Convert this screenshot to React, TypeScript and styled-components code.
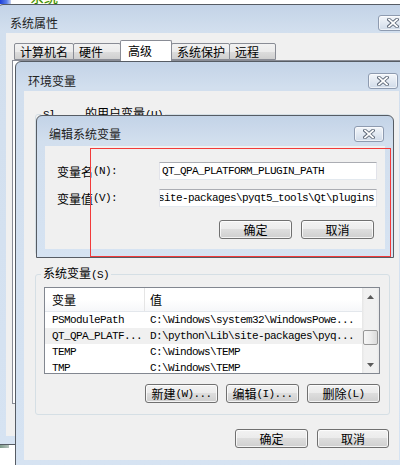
import React from "react";
import styled, { createGlobalStyle } from "styled-components";

const CJK = `"Noto Sans CJK SC", "Liberation Sans", sans-serif`;
const MONO = `"Liberation Mono", "Noto Sans CJK SC", monospace`;

const GlobalStyle = createGlobalStyle`
  html, body { margin: 0; padding: 0; background: #fff; }
  body { width: 400px; height: 465px; overflow: hidden; font-family: ${CJK}; font-size: 12px; color: #000; }
  * { box-sizing: border-box; }
`;

const Desktop = styled.div`
  position: relative;
  width: 400px;
  height: 465px;
  overflow: hidden;
  background: #fff;
`;

const DesktopIcon = styled.div`
  position: absolute;
  left: 0;
  top: 0;
  width: 11px;
  height: 4px;
  background: linear-gradient(90deg, #1d3fd8, #5a7ee8 60%, #c9d4ef);
`;

const DesktopLabel = styled.span`
  position: absolute;
  left: 30px;
  top: -12px;
  font-family: ${CJK};
  font-size: 14px;
  line-height: 16px;
  color: #2f8a12;
  text-shadow: 0 0 1px #e2e23a;
`;

const DesktopThumb = styled.div`
  position: absolute;
  left: 0;
  top: 445px;
  width: 9px;
  height: 3px;
  background: linear-gradient(90deg, #7d9a8a, #b7c3bd);
`;

const Window = styled.div<{ $left: number; $top: number; $width: number; $height: number; $z: number }>`
  position: absolute;
  z-index: ${(p) => p.$z};
  left: ${(p) => p.$left}px;
  top: ${(p) => p.$top}px;
  width: ${(p) => p.$width}px;
  height: ${(p) => p.$height}px;
  border: 1px solid #565c64;
  border-radius: 6px 6px 0 0;
  background: linear-gradient(180deg, #c3d3e7 0px, #d2dfee 26px, #d6e3f2 100%);
  padding: 0 8px 8px;
  display: flex;
  flex-direction: column;
`;

const TitleBar = styled.div<{ $h: number; $pad: number }>`
  flex: none;
  height: ${(p) => p.$h}px;
  padding-top: ${(p) => p.$pad}px;
  display: flex;
  align-items: center;
  justify-content: space-between;
`;

const Caption = styled.span`
  margin-left: 4px;
  font-family: ${CJK};
  font-size: 12px;
  line-height: 14px;
  color: #222;
`;

const CloseBtn = styled.div`
  width: 30px;
  height: 16px;
  margin-right: 1px;
  border: 1px solid #8e9bb0;
  border-radius: 3px;
  background: linear-gradient(180deg, #f3f6fa 0%, #e2e9f2 50%, #d0dbe9 100%);
  box-shadow: inset 0 0 0 1px rgba(255, 255, 255, 0.6);
  display: grid;
  place-items: center;
`;

const CloseIcon = () => (
  <svg width="12" height="10" viewBox="0 0 12 10">
    <path d="M2 1.5 L10 8.5 M10 1.5 L2 8.5" stroke="#5d6878" strokeWidth="3.6" strokeLinecap="square" fill="none" />
    <path d="M2 1.5 L10 8.5 M10 1.5 L2 8.5" stroke="#ffffff" strokeWidth="1.7" strokeLinecap="square" fill="none" />
  </svg>
);

const Client = styled.div`
  flex: 1;
  min-height: 0;
  background: #f0f0f0;
  overflow: hidden;
`;

/* ---------- Window 1: 系统属性 ---------- */

const PropsClient = styled(Client)`
  padding: 7px 6px 0 6px;
`;

const TabRow = styled.div`
  height: 20px;
  padding-left: 2px;
  display: flex;
  align-items: flex-end;
`;

const Tab = styled.div<{ $w: number; $selected?: boolean; $first?: boolean }>`
  position: relative;
  width: ${(p) => p.$w}px;
  height: ${(p) => (p.$selected ? 21 : 17)}px;
  margin-left: ${(p) => (p.$first ? 0 : -1)}px;
  margin-bottom: ${(p) => (p.$selected ? -1 : 0)}px;
  z-index: ${(p) => (p.$selected ? 2 : 1)};
  border: 1px solid #898c95;
  border-bottom: ${(p) => (p.$selected ? "none" : "1px solid #898c95")};
  border-radius: 2px 2px 0 0;
  background: ${(p) => (p.$selected ? "#ffffff" : "linear-gradient(180deg, #f2f2f2 0%, #ebebeb 50%, #dddddd 51%, #cfcfcf 100%)")};
  padding: ${(p) => (p.$selected ? "2px 0 0 7px" : "0 0 0 5px")};
  font-size: 12px;
  line-height: 15px;
  white-space: nowrap;
`;

const TabPane = styled.div`
  position: relative;
  z-index: 1;
  height: 344px;
  border: 1px solid #898c95;
  background: #fff;
`;

/* ---------- Window 2: 环境变量 ---------- */

const EnvClient = styled(Client)`
  padding: 15px 9px 0 11px;
  display: flex;
  flex-direction: column;
`;

const Group = styled.fieldset`
  margin: 0;
  padding: 0 9px 11px 8px;
  border: 1px solid #d5dfe5;
  border-radius: 3px;
  min-width: 0;
`;

const Legend = styled.legend`
  margin-left: -3px;
  padding: 0 2px;
  font-family: ${CJK};
  font-size: 12px;
  line-height: 14px;
  white-space: nowrap;
`;

const Latin = styled.span`
  font-family: ${MONO};
  font-size: 11px;
  letter-spacing: -0.6px;
`;

const NameGap = styled.span`
  display: inline-block;
  width: 30px;
`;

const HiddenBody = styled.div`
  height: 121px;
`;

const SysGroup = styled(Group)`
  margin-top: 11px;
`;

const ListBox = styled.div`
  margin-top: 5px;
  height: 87px;
  border: 1px solid #828790;
  background: #fff;
  display: grid;
  grid-template-columns: 1fr 17px;
  overflow: hidden;
`;

const ListBody = styled.div`
  min-width: 0;
  overflow: hidden;
`;

const HeaderRow = styled.div`
  height: 24px;
  display: grid;
  grid-template-columns: 100px 1fr;
  background: linear-gradient(180deg, #ffffff 0%, #ffffff 50%, #f6f7f9 100%);
  border-bottom: 1px solid #e3e7ec;
`;

const HeaderCell = styled.div<{ $pad: number; $divider?: boolean }>`
  padding-left: ${(p) => p.$pad}px;
  display: flex;
  align-items: center;
  font-size: 12px;
  border-right: ${(p) => (p.$divider ? "1px solid #e5e5e5" : "none")};
`;

const Row = styled.div<{ $hl?: boolean }>`
  height: 16px;
  display: grid;
  grid-template-columns: 100px 1fr;
  background: ${(p) => (p.$hl ? "#f0f0f0" : "transparent")};
  font-family: ${MONO};
  font-size: 11px;
  letter-spacing: -0.6px;
  line-height: 16px;
  white-space: nowrap;
`;

const Cell = styled.div<{ $pad: number }>`
  padding-left: ${(p) => p.$pad}px;
  overflow: hidden;
`;

const ScrollBar = styled.div`
  display: flex;
  flex-direction: column;
  background: linear-gradient(90deg, #e6e6e6 0%, #f1f1f1 15%, #f1f1f1 85%, #e8e8e8 100%);
`;

const ScrollArrow = styled.div`
  height: 17px;
  flex: none;
  display: grid;
  place-items: center;
`;

const Track = styled.div`
  flex: 1;
  padding-top: 25px;
`;

const Thumb = styled.div`
  height: 15px;
  margin: 0 1px;
  border: 1px solid #979797;
  border-radius: 2px;
  background: linear-gradient(90deg, #f6f6f6 0%, #ececec 50%, #dadada 100%);
`;

const Arrow = ({ down }: { down?: boolean }) => (
  <svg width="7" height="4" viewBox="0 0 7 4">
    <path d={down ? "M0 0 L7 0 L3.5 4 Z" : "M0 4 L7 4 L3.5 0 Z"} fill="#5a5a5a" />
  </svg>
);

const ButtonRow = styled.div<{ $mt: number; $gap: number; $pr?: number }>`
  margin-top: ${(p) => p.$mt}px;
  padding-right: ${(p) => p.$pr ?? 0}px;
  display: flex;
  justify-content: flex-end;
  gap: ${(p) => p.$gap}px;
`;

const Btn = styled.div<{ $w?: number }>`
  width: ${(p) => p.$w ?? 73}px;
  height: 19px;
  border: 1px solid #707070;
  border-radius: 3px;
  background: linear-gradient(180deg, #f2f2f2 0%, #ebebeb 49%, #dddddd 50%, #cfcfcf 100%);
  box-shadow: inset 0 0 0 1px rgba(255, 255, 255, 0.75);
  display: flex;
  align-items: center;
  justify-content: center;
  font-family: ${CJK};
  font-size: 12px;
  line-height: 14px;
  white-space: nowrap;
`;

/* ---------- Window 3: 编辑系统变量 ---------- */

const EditClient = styled(Client)`
  padding: 16px 11px 0 12px;
`;

const FormGrid = styled.div`
  display: grid;
  grid-template-columns: 102px 218px;
  grid-auto-rows: 18px;
  row-gap: 9px;
`;

const FieldLabel = styled.div`
  display: flex;
  align-items: center;
  font-size: 12px;
  white-space: nowrap;
`;

const Field = styled.div<{ $end?: boolean }>`
  border: 1px solid #e2e3ea;
  border-top-color: #abadb3;
  border-bottom-color: #e3e9ef;
  background: #fff;
  display: flex;
  align-items: center;
  justify-content: ${(p) => (p.$end ? "flex-end" : "flex-start")};
  padding: 0 2px 0 2px;
  overflow: hidden;
  white-space: nowrap;
  font-family: ${MONO};
  font-size: 11px;
  letter-spacing: -0.6px;
`;

const FieldText = styled.span`
  flex: none;
`;

const Annotation = styled.div`
  position: absolute;
  z-index: 10;
  left: 90px;
  top: 148px;
  width: 301px;
  height: 109px;
  border: 1px solid #f23a3a;
  pointer-events: none;
`;

const rows = [
  { name: "PSModulePath", value: "C:\\Windows\\system32\\WindowsPowe..." },
  { name: "QT_QPA_PLATF...", value: "D:\\python\\Lib\\site-packages\\pyq...", hl: true },
  { name: "TEMP", value: "C:\\Windows\\TEMP" },
  { name: "TMP", value: "C:\\Windows\\TEMP" },
];

export default function App() {
  return (
    <>
      <GlobalStyle />
      <Desktop>
        <DesktopIcon />
        <DesktopLabel>系统</DesktopLabel>
        <DesktopThumb />

        <Window $z={1} $left={-3} $top={4} $width={421} $height={441}>
          <TitleBar $h={28} $pad={8}>
            <Caption>系统属性</Caption>
            <CloseBtn>
              <CloseIcon />
            </CloseBtn>
          </TitleBar>
          <PropsClient>
            <TabRow>
              <Tab $w={60} $first>计算机名</Tab>
              <Tab $w={48}>硬件</Tab>
              <Tab $w={52} $selected>高级</Tab>
              <Tab $w={59}>系统保护</Tab>
              <Tab $w={47}>远程</Tab>
            </TabRow>
            <TabPane />
          </PropsClient>
        </Window>

        <Window $z={2} $left={15} $top={61} $width={393} $height={408}>
          <TitleBar $h={29} $pad={8}>
            <Caption>环境变量</Caption>
            <CloseBtn>
              <CloseIcon />
            </CloseBtn>
          </TitleBar>
          <EnvClient>
            <Group>
              <Legend>
                <Latin>Sl</Latin>
                <NameGap />
                的用户变量<Latin>(U)</Latin>
              </Legend>
              <HiddenBody />
            </Group>
            <SysGroup>
              <Legend>
                系统变量<Latin>(S)</Latin>
              </Legend>
              <ListBox>
                <ListBody>
                  <HeaderRow>
                    <HeaderCell $pad={7} $divider>变量</HeaderCell>
                    <HeaderCell $pad={5}>值</HeaderCell>
                  </HeaderRow>
                  {rows.map((r) => (
                    <Row key={r.name} $hl={r.hl}>
                      <Cell $pad={7}>{r.name}</Cell>
                      <Cell $pad={5}>{r.value}</Cell>
                    </Row>
                  ))}
                </ListBody>
                <ScrollBar>
                  <ScrollArrow>
                    <Arrow />
                  </ScrollArrow>
                  <Track>
                    <Thumb />
                  </Track>
                  <ScrollArrow>
                    <Arrow down />
                  </ScrollArrow>
                </ScrollBar>
              </ListBox>
              <ButtonRow $mt={10} $gap={8}>
                <Btn>
                  新建<Latin>(W)...</Latin>
                </Btn>
                <Btn>
                  编辑<Latin>(I)...</Latin>
                </Btn>
                <Btn>
                  删除<Latin>(L)</Latin>
                </Btn>
              </ButtonRow>
            </SysGroup>
            <ButtonRow $mt={14} $gap={9} $pr={1}>
              <Btn>确定</Btn>
              <Btn $w={72}>取消</Btn>
            </ButtonRow>
          </EnvClient>
        </Window>

        <Window $z={3} $left={36} $top={115} $width={358} $height={143}>
          <TitleBar $h={30} $pad={5}>
            <Caption>编辑系统变量</Caption>
            <CloseBtn>
              <CloseIcon />
            </CloseBtn>
          </TitleBar>
          <EditClient>
            <FormGrid>
              <FieldLabel>
                变量名<Latin>(N):</Latin>
              </FieldLabel>
              <Field>
                <FieldText>QT_QPA_PLATFORM_PLUGIN_PATH</FieldText>
              </Field>
              <FieldLabel>
                变量值<Latin>(V):</Latin>
              </FieldLabel>
              <Field $end>
                <FieldText>{"D:\\python\\Lib\\site-packages\\pyqt5_tools\\Qt\\plugins"}</FieldText>
              </Field>
            </FormGrid>
            <ButtonRow $mt={13} $gap={9}>
              <Btn>确定</Btn>
              <Btn>取消</Btn>
            </ButtonRow>
          </EditClient>
        </Window>

        <Annotation />
      </Desktop>
    </>
  );
}
